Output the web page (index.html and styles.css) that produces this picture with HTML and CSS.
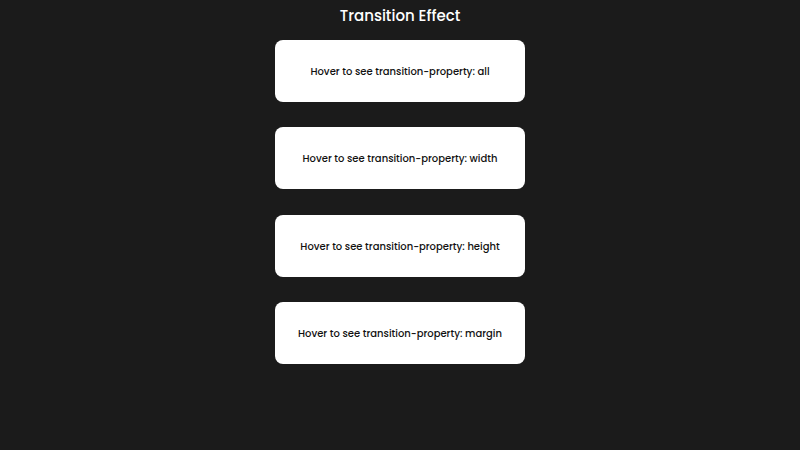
FILE: index.html
```html
<!DOCTYPE html>
<html lang="en">
<head>
<meta charset="utf-8">
<title>Transition Effect</title>
<link rel="stylesheet" href="styles.css">
</head>
<body>
  <main class="page">
    <h1 class="title">Transition Effect</h1>
    <div class="list">
      <div class="box box-all">Hover to see transition-property: all</div>
      <div class="box box-width">Hover to see transition-property: width</div>
      <div class="box box-height">Hover to see transition-property: height</div>
      <div class="box box-margin">Hover to see transition-property: margin</div>
    </div>
  </main>
</body>
</html>
```
FILE: styles.css
```css
* { box-sizing: border-box; }

html, body {
  margin: 0;
  height: 100%;
  background: #1b1b1b;
  font-family: "Poppins", "Inter", "Open Sans", sans-serif;
}

.page {
  display: flex;
  flex-direction: column;
  align-items: center;
  padding-top: 5px;
}

.title {
  margin: 0;
  color: #ffffff;
  font-size: 15px;
  font-weight: 500;
  line-height: 22px;
}

.list {
  display: flex;
  flex-direction: column;
  gap: 25.3px;
  margin-top: 13px;
}

.box {
  width: 250px;
  height: 62px;
  background: #ffffff;
  border-radius: 8px;
  display: flex;
  align-items: center;
  justify-content: center;
  padding-top: 2px;
  color: #111111;
  font-size: 10px;
  font-weight: 500;
  transition-duration: 0.5s;
}

.box-all { transition-property: all; }
.box-width { transition-property: width; }
.box-height { transition-property: height; }
.box-margin { transition-property: margin; }

.box-all:hover { width: 300px; height: 80px; }
.box-width:hover { width: 300px; }
.box-height:hover { height: 80px; }
.box-margin:hover { margin-left: 40px; }
```
